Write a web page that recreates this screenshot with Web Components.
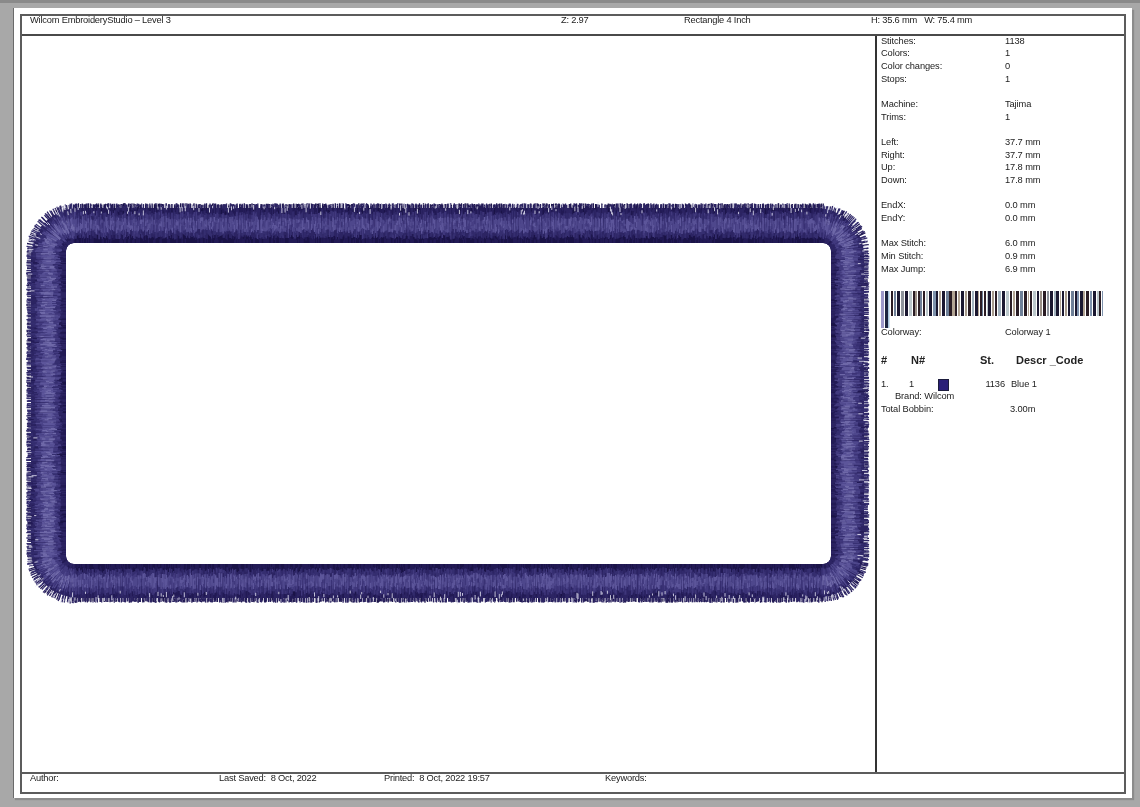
<!DOCTYPE html>
<html>
<head>
<meta charset="utf-8">
<title>Wilcom EmbroideryStudio</title>
<style>
  html, body { margin: 0; height: 100%; overflow: hidden; }
  body { background: linear-gradient(#8a8a8a 0, #8a8a8a 2.5px, #a8a8a8 3.5px); }
</style>
</head>
<body>
<report-sheet>
  <report-bar slot="header" columns="531px 123px 187px 1fr">
    <span>Wilcom EmbroideryStudio – Level 3</span>
    <span>Z: 2.97</span>
    <span>Rectangle 4 Inch</span>
    <span>H: 35.6 mm&nbsp;&nbsp; W: 75.4 mm</span>
  </report-bar>
  <stitch-outline slot="canvas"></stitch-outline>
  <stats-panel slot="side">
    <stat-group>
      <stat-row label="Stitches:" value="1138"></stat-row>
      <stat-row label="Colors:" value="1"></stat-row>
      <stat-row label="Color changes:" value="0"></stat-row>
      <stat-row label="Stops:" value="1"></stat-row>
    </stat-group>
    <stat-group>
      <stat-row label="Machine:" value="Tajima"></stat-row>
      <stat-row label="Trims:" value="1"></stat-row>
    </stat-group>
    <stat-group>
      <stat-row label="Left:" value="37.7 mm"></stat-row>
      <stat-row label="Right:" value="37.7 mm"></stat-row>
      <stat-row label="Up:" value="17.8 mm"></stat-row>
      <stat-row label="Down:" value="17.8 mm"></stat-row>
    </stat-group>
    <stat-group>
      <stat-row label="EndX:" value="0.0 mm"></stat-row>
      <stat-row label="EndY:" value="0.0 mm"></stat-row>
    </stat-group>
    <stat-group>
      <stat-row label="Max Stitch:" value="6.0 mm"></stat-row>
      <stat-row label="Min Stitch:" value="0.9 mm"></stat-row>
      <stat-row label="Max Jump:" value="6.9 mm"></stat-row>
    </stat-group>
    <bar-code></bar-code>
    <stat-row label="Colorway:" value="Colorway 1"></stat-row>
    <color-table></color-table>
  </stats-panel>
  <report-bar slot="footer" columns="189px 165px 221px 1fr">
    <span>Author:</span>
    <span>Last Saved:&nbsp; 8 Oct, 2022</span>
    <span>Printed:&nbsp; 8 Oct, 2022 19:57</span>
    <span>Keywords:</span>
  </report-bar>
</report-sheet>

<script>
// Small seeded random so the stitches come out the same every run
function seeded(seed) {
  return function () {
    seed = (seed * 1664525 + 1013904223) >>> 0;
    return (seed >>> 8) / 16777216;
  };
}

// Sheet of paper with the frame, header, canvas, side panel and footer
class ReportSheet extends HTMLElement {
  constructor() {
    super();
    this.attachShadow({ mode: 'open' });
    this.shadowRoot.innerHTML = `
      <style>
        :host {
          display: block;
          box-sizing: border-box;
          width: 1119px;
          height: 790px;
          margin: 8px 0 0 13px;
          padding: 6px 6px 4px 6px;
          background: #fff;
          border-left: 1px solid #6a6a6a;
          box-shadow: 2px 2px 1px #8c8c8c;
          font: 9.3px/12.67px "Liberation Sans", Arial, sans-serif;
          letter-spacing: -.1px;
          color: #222;
        }
        .frame {
          box-sizing: border-box;
          height: 780px;
          border: 2px solid #5c5c5c;
          display: grid;
          grid-template-rows: 18px 1fr 18px;
          filter: blur(.4px);
        }
        .main {
          display: grid;
          grid-template-columns: 853px 1fr;
          border-top: 2px solid #4a4a4a;
          border-bottom: 2px solid #5c5c5c;
          min-height: 0;
        }
        .side {
          border-left: 2px solid #333;
          padding-left: 4px;
          overflow: hidden;
        }
      </style>
      <div class="frame">
        <slot name="header"></slot>
        <div class="main">
          <slot name="canvas"></slot>
          <div class="side"><slot name="side"></slot></div>
        </div>
        <slot name="footer"></slot>
      </div>
    `;
  }
}

// Header and footer strip, cells are slotted in
class ReportBar extends HTMLElement {
  constructor() {
    super();
    this.attachShadow({ mode: 'open' });
    const columns = this.getAttribute('columns') || '1fr';
    this.shadowRoot.innerHTML = `
      <style>
        :host {
          display: grid;
          grid-template-columns: ${columns};
          padding: 0 0 0 8px;
          white-space: nowrap;
          align-items: start;
          letter-spacing: -.2px;
          line-height: 8px;
        }
      </style>
      <slot></slot>
    `;
  }
}

// The embroidered rounded rectangle, stitch by stitch
class StitchOutline extends HTMLElement {
  constructor() {
    super();
    this.attachShadow({ mode: 'open' });
    this.shadowRoot.innerHTML = `
      <style>
        :host { display: block; overflow: hidden; }
        svg { display: block; }
      </style>
      <svg width="853" height="736" viewBox="22 36 853 736" xmlns="http://www.w3.org/2000/svg">
        <g id="stitches" fill="none" stroke-linecap="butt"></g>
      </svg>
    `;
    this.draw();
  }

  roundedRect(x, y, w, h, r) {
    return `M${x + r} ${y}H${x + w - r}A${r} ${r} 0 0 1 ${x + w} ${y + r}V${y + h - r}` +
      `A${r} ${r} 0 0 1 ${x + w - r} ${y + h}H${x + r}A${r} ${r} 0 0 1 ${x} ${y + h - r}` +
      `V${y + r}A${r} ${r} 0 0 1 ${x + r} ${y}Z`;
  }

  draw() {
    const rnd = seeded(77);
    const ramp = ['#1a1347', '#221a55', '#2c2463', '#352e70', '#41397e', '#4e478c', '#5c559a', '#6e68a8'];
    const paths = ramp.map(() => []);
    const specks = [];
    const x0 = 66, x1 = 831, y0 = 243, y1 = 564, r = 8;
    const depth = { top: 39, right: 37.5, bottom: 38, left: 39 };

    // brightness across the band: 0 at the inner edge, 1 at the outer edge
    const profile = (t, lift) => {
      let v;
      if (t < .16) v = .2;
      else if (t < .3) v = 2.6;
      else if (t < .62) v = 5;
      else if (t < .76) v = 3.2;
      else v = 1.2;
      return v + lift;
    };

    const stitch = (px, py, nx, ny, len, lift, speck) => {
      const end = len + rnd() * 1.6 - .8;
      const tx = -ny, ty = nx;
      const tilt = (rnd() - .5) * .05;
      let d = 0;
      while (d < end) {
        const seg = Math.min(2.5 + rnd() * 3.5, end - d);
        const v = profile((d + seg / 2) / len, lift) + (rnd() - .5) * 2.2;
        const b = Math.max(0, Math.min(ramp.length - 1, Math.round(v)));
        const e = d + seg;
        const ax = px + nx * d + tx * tilt * d, ay = py + ny * d + ty * tilt * d;
        const bx = px + nx * e + tx * tilt * e, by = py + ny * e + ty * tilt * e;
        paths[b].push(`M${ax.toFixed(1)} ${ay.toFixed(1)}L${bx.toFixed(1)} ${by.toFixed(1)}`);
        d = e;
      }
      if (rnd() < speck) {
        const from = len * (.7 + rnd() * .24);
        const l = 2 + rnd() * 3.5;
        specks.push(`M${(px + nx * from).toFixed(1)} ${(py + ny * from).toFixed(1)}L${(px + nx * (from + l)).toFixed(1)} ${(py + ny * (from + l)).toFixed(1)}`);
      }
    };

    const step = 1.05;
    for (let x = x0 + r; x <= x1 - r; x += step) {
      stitch(x, y0, 0, -1, depth.top, 0, .16);
      stitch(x, y1, 0, 1, depth.bottom, .2, .16);
    }
    for (let y = y0 + r; y <= y1 - r; y += step) {
      stitch(x0, y, -1, 0, depth.left, 1.1, .05);
      stitch(x1, y, 1, 0, depth.right, 1.1, .05);
    }
    // corners fan out from the small inner radius, which opens gaps on the outside
    const corners = [
      [x0 + r, y0 + r, Math.PI, depth.left],
      [x1 - r, y0 + r, Math.PI * 1.5, depth.right],
      [x1 - r, y1 - r, 0, depth.right],
      [x0 + r, y1 - r, Math.PI * .5, depth.left]
    ];
    corners.forEach(([cx, cy, start, len]) => {
      const n = 40;
      for (let i = 0; i <= n; i++) {
        const a = start + (Math.PI / 2) * (i / n);
        const nx = Math.cos(a), ny = Math.sin(a);
        stitch(cx + nx * r, cy + ny * r, nx, ny, len, 1, .4);
      }
    });

    // solid bed under the stitches, stops short of the corner tips
    const bed = this.roundedRect(x0 - 35, y0 - 35, x1 - x0 + 68, y1 - y0 + 69, 48) +
      this.roundedRect(x0, y0, x1 - x0, y1 - y0, r);
    let svg = `<path fill="#2c2463" fill-rule="evenodd" d="${bed}"/>`;
    ramp.forEach((color, i) => {
      svg += `<path stroke="${color}" stroke-width="1.3" d="${paths[i].join('')}"/>`;
    });
    svg += `<path stroke="#e6e6f4" stroke-width=".9" opacity=".9" d="${specks.join('')}"/>`;
    this.shadowRoot.getElementById('stitches').innerHTML = svg;
  }
}

// Column of stat groups
class StatsPanel extends HTMLElement {
  constructor() {
    super();
    this.attachShadow({ mode: 'open' });
    this.shadowRoot.innerHTML = `
      <style>
        :host { display: block; margin-top: -1.3px; }
      </style>
      <slot></slot>
    `;
  }
}

class StatGroup extends HTMLElement {
  constructor() {
    super();
    this.attachShadow({ mode: 'open' });
    this.shadowRoot.innerHTML = `
      <style>
        :host { display: block; margin-bottom: 12.67px; }
      </style>
      <slot></slot>
    `;
  }
}

class StatRow extends HTMLElement {
  constructor() {
    super();
    this.attachShadow({ mode: 'open' });
    const label = this.getAttribute('label') || '';
    const value = this.getAttribute('value') || '';
    this.shadowRoot.innerHTML = `
      <style>
        :host {
          display: grid;
          grid-template-columns: 124px 1fr;
          height: 12.67px;
          white-space: nowrap;
        }
      </style>
      <span>${label}</span>
      <span>${value}</span>
    `;
  }
}

// Barcode strip, two first bars run longer
class BarCode extends HTMLElement {
  constructor() {
    super();
    this.attachShadow({ mode: 'open' });
    this.shadowRoot.innerHTML = `
      <style>
        :host { display: block; height: 35.5px; margin: 15.67px 0 0 0; }
        svg { display: block; overflow: visible; }
      </style>
      <svg width="224" height="38" xmlns="http://www.w3.org/2000/svg"></svg>
    `;
    const rnd = seeded(2022);
    const soft = ['#a89c8e', '#8f949c', '#7f93ad', '#bcc8cc', '#9a8f86', '#a3b3bf', '#b3a594', '#6f8098'];
    let bars = '<rect x="0" y="0" width="3" height="37" fill="#9d99c9"/>' +
      '<rect x="4" y="0" width="3" height="37" fill="#1c2440"/>' +
      '<rect x="7" y="0" width="1.5" height="37" fill="#a7c6dc"/>';
    let x = 10;
    let dark = true;
    while (x < 222) {
      const w = dark ? 2 + Math.floor(rnd() * 2) : 1 + Math.floor(rnd() * 3);
      const color = dark ? (rnd() < .5 ? '#1a1730' : '#2a1c24') : soft[Math.floor(rnd() * soft.length)];
      bars += `<rect x="${x}" y="0" width="${Math.min(w, 222 - x)}" height="25" fill="${color}"/>`;
      x += w + (rnd() < .75 ? 1 : 0);
      dark = !dark;
    }
    this.shadowRoot.querySelector('svg').innerHTML = bars;
  }
}

// Thread list under the barcode
class ColorTable extends HTMLElement {
  constructor() {
    super();
    this.attachShadow({ mode: 'open' });
    this.shadowRoot.innerHTML = `
      <style>
        :host { display: block; margin-top: 14.5px; }
        .head {
          display: grid;
          grid-template-columns: 30px 69px 36px 1fr;
          white-space: nowrap;
          font-weight: bold;
          font-size: 11px;
          line-height: 14px;
          letter-spacing: 0;
        }
        .thread {
          display: grid;
          grid-template-columns: 28px 29px 11px 56px 1fr;
          white-space: nowrap;
          margin-top: 11px;
          align-items: center;
          height: 12px;
        }
        .swatch {
          width: 9px;
          height: 10px;
          background: #2a1f78;
          border: 1px solid #1c1c3c;
        }
        .num { text-align: right; }
        .name { padding-left: 6px; }
        .brand { padding-left: 14px; }
        .total { display: grid; grid-template-columns: 129px 1fr; }
      </style>
      <div class="head">
        <span>#</span><span>N#</span><span>St.</span><span>Descr _Code</span>
      </div>
      <div class="thread">
        <span>1.</span><span>1</span><span class="swatch"></span>
        <span class="num">1136</span><span class="name">Blue 1</span>
      </div>
      <div class="brand">Brand: Wilcom</div>
      <div class="total"><span>Total Bobbin:</span><span>3.00m</span></div>
    `;
  }
}

customElements.define('report-sheet', ReportSheet);
customElements.define('report-bar', ReportBar);
customElements.define('stitch-outline', StitchOutline);
customElements.define('stats-panel', StatsPanel);
customElements.define('stat-group', StatGroup);
customElements.define('stat-row', StatRow);
customElements.define('bar-code', BarCode);
customElements.define('color-table', ColorTable);
</script>
</body>
</html>
